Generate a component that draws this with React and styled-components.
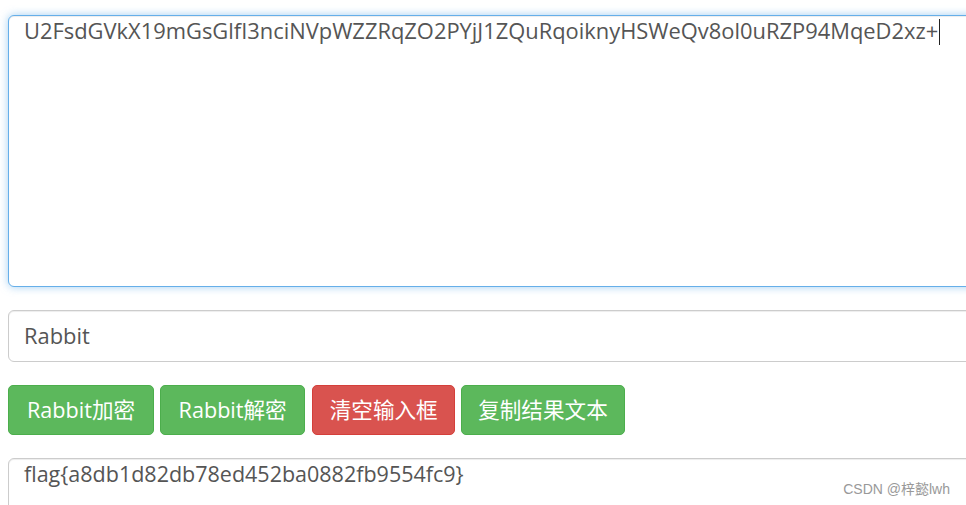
import React from "react";
import styled, { createGlobalStyle } from "styled-components";

const Global = createGlobalStyle`
  html, body { margin: 0; padding: 0; background: #fff; overflow: hidden; }
  body { font-family: "Open Sans", "Noto Sans CJK SC", sans-serif; }
`;

const Page = styled.div`
  position: relative;
  width: 966px;
  height: 505px;
  overflow: hidden;
  padding: 15px 0 0 8px;
  box-sizing: border-box;
  display: flex;
  flex-direction: column;
  gap: 23px;
`;

const Field = styled.div`
  box-sizing: border-box;
  width: 1100px;
  flex: none;
  height: ${(p) => p.$h}px;
  border: 1px solid ${(p) => (p.$focus ? "#66afe9" : "#ccc")};
  border-radius: 6px;
  background: #fff;
  box-shadow: ${(p) =>
    p.$focus
      ? "inset 0 1px 1px rgba(0,0,0,.075), 0 0 8px rgba(102,175,233,.6)"
      : "inset 0 1px 1px rgba(0,0,0,.075)"};
  padding: ${(p) => p.$pad};
  color: #555;
  font-size: ${(p) => p.$fs || 21.9}px;
  line-height: 30px;
  white-space: pre;
`;

const Caret = styled.span`
  display: inline-block;
  width: 1px;
  height: 26px;
  background: #222;
  vertical-align: -6px;
  margin-left: 1px;
`;

const Toolbar = styled.div`
  display: flex;
  gap: 6px;
  flex: none;
`;

const Button = styled.button`
  height: 50px;
  box-sizing: border-box;
  padding: 0 ${(p) => p.$px || 17}px;
  border-radius: 5px;
  border: 1px solid ${(p) => (p.$danger ? "#d43f3a" : "#4cae4c")};
  background: ${(p) => (p.$danger ? "#d9534f" : "#5cb85c")};
  color: #fff;
  font-family: "Open Sans", "Noto Sans CJK SC", sans-serif;
  font-size: 21.6px;
  line-height: 1;
  margin-left: ${(p) => p.$ml || 0}px;
`;

const Watermark = styled.div`
  position: absolute;
  right: 16px;
  bottom: 7px;
  font-family: "Liberation Sans", "Noto Sans CJK SC", sans-serif;
  font-size: 14px;
  color: #999;
`;

export default function App() {
  return (
    <>
      <Global />
      <Page>
        <Field $h={272} $focus $pad="0px 15px">
          U2FsdGVkX19mGsGlfI3nciNVpWZZRqZO2PYjJ1ZQuRqoiknyHSWeQv8ol0uRZP94MqeD2xz+
          <Caret />
        </Field>
        <Field $h={52} $pad="10px 15px">Rabbit</Field>
        <Toolbar>
          <Button $px={18}>Rabbit加密</Button>
          <Button $px={17.5}>Rabbit解密</Button>
          <Button $danger $ml={1} $px={16.5}>清空输入框</Button>
          <Button $px={16}>复制结果文本</Button>
        </Toolbar>
        <Field $h={80} $fs={21.5} $pad="0px 15px">flag{"{"}a8db1d82db78ed452ba0882fb9554fc9{"}"}</Field>
        <Watermark>CSDN @梓懿lwh</Watermark>
      </Page>
    </>
  );
}
